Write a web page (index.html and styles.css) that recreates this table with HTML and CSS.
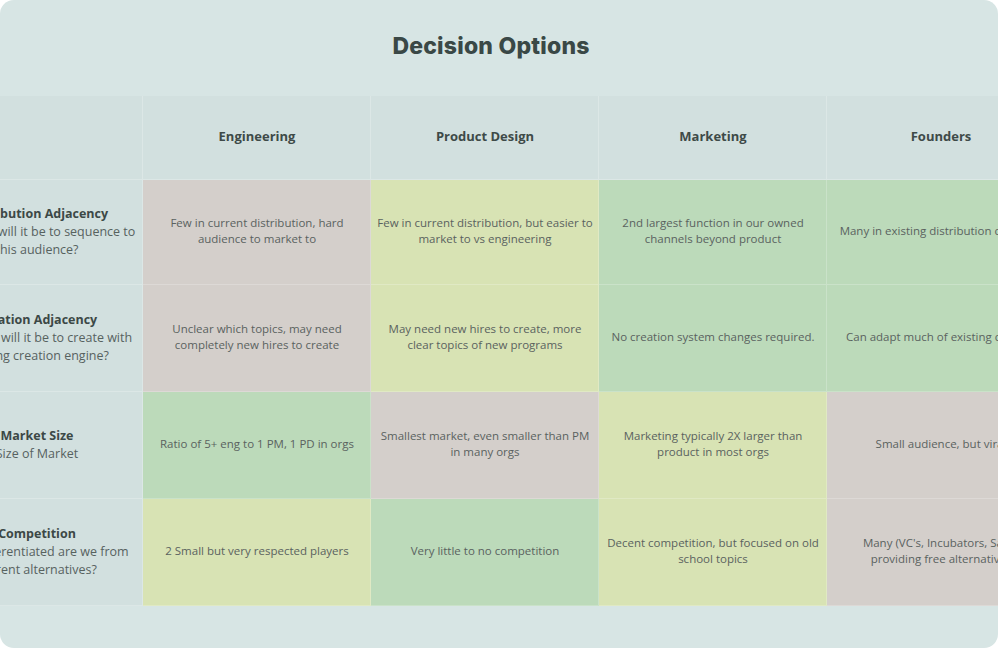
FILE: index.html
```html
<!DOCTYPE html>
<html>
<head>
<meta charset="utf-8">
<link rel="stylesheet" href="styles.css">
</head>
<body>
<div class="card">
  <h1 class="title">Decision Options</h1>
  <div class="grid">
    <div class="cell head corner"></div>
    <div class="cell head">Engineering</div>
    <div class="cell head">Product Design</div>
    <div class="cell head">Marketing</div>
    <div class="cell head">Founders</div>

    <div class="cell label"><b>Distribution Adjacency</b><span>How easy will it be to sequence to<br>this audience?</span></div>
    <div class="cell tan">Few in current distribution, hard<br>audience to market to</div>
    <div class="cell yellow">Few in current distribution, but easier to<br>market to vs engineering</div>
    <div class="cell green">2nd largest function in our owned<br>channels beyond product</div>
    <div class="cell green">Many in existing distribution channels</div>

    <div class="cell label"><b>Creation Adjacency</b><span>How easy will it be to create with<br>existing creation engine?</span></div>
    <div class="cell tan">Unclear which topics, may need<br>completely new hires to create</div>
    <div class="cell yellow">May need new hires to create, more<br>clear topics of new programs</div>
    <div class="cell green">No creation system changes required.</div>
    <div class="cell green">Can adapt much of existing content</div>

    <div class="cell label"><b>Market Size</b><span>Size of Market</span></div>
    <div class="cell green">Ratio of 5+ eng to 1 PM, 1 PD in orgs</div>
    <div class="cell tan">Smallest market, even smaller than PM<br>in many orgs</div>
    <div class="cell yellow">Marketing typically 2X larger than<br>product in most orgs</div>
    <div class="cell tan">Small audience, but viral</div>

    <div class="cell label"><b>Competition</b><span>How differentiated are we from<br>current alternatives?</span></div>
    <div class="cell yellow">2 Small but very respected players</div>
    <div class="cell green">Very little to no competition</div>
    <div class="cell yellow">Decent competition, but focused on old<br>school topics</div>
    <div class="cell tan">Many (VC's, Incubators, SaaS)<br>providing free alternatives</div>
  </div>
</div>
</body>
</html>
```
FILE: styles.css
```css
html, body {
  margin: 0;
  padding: 0;
  background: #ffffff;
}
body {
  width: 1000px;
  height: 650px;
  overflow: hidden;
  font-family: "Open Sans", "Liberation Sans", sans-serif;
}
.card {
  width: 998px;
  height: 648px;
  background: #d7e5e4;
  border-radius: 14px;
  overflow: hidden;
}
.title {
  margin: 0;
  height: 96px;
  box-sizing: border-box;
  padding: 0 16px 4px 0;
  display: flex;
  align-items: center;
  justify-content: center;
  font-family: "Inter", "Liberation Sans", sans-serif;
  font-weight: 800;
  font-size: 23px;
  color: #3a4846;
  letter-spacing: 0.2px;
}
.grid {
  display: grid;
  grid-template-columns: repeat(5, 228px);
  grid-template-rows: 84px 105px 107px 107px 107px;
  margin-left: -85px;
  width: 1140px;
}
.cell {
  display: flex;
  flex-direction: column;
  align-items: center;
  justify-content: center;
  text-align: center;
  white-space: nowrap;
  font-size: 11.5px;
  line-height: 16px;
  color: #5a625f;
  box-sizing: border-box;
  padding-bottom: 3px;
  box-shadow: inset -1px -1px 0 rgba(255, 255, 255, 0.22);
}
.head {
  background: #d2e0df;
  font-weight: 700;
  font-size: 13px;
  color: #3e4a48;
  padding-bottom: 4px;
}
.label {
  background: #d2e0df;
  padding-left: 16px;
  padding-bottom: 2px;
  font-size: 12.5px;
  line-height: 18px;
  color: #57625f;
}
.label b {
  font-weight: 700;
  color: #3c4846;
}
.tan {
  background: #d4cfcb;
}
.yellow {
  background: #d8e3b4;
}
.green {
  background: #bcdaba;
}
```
